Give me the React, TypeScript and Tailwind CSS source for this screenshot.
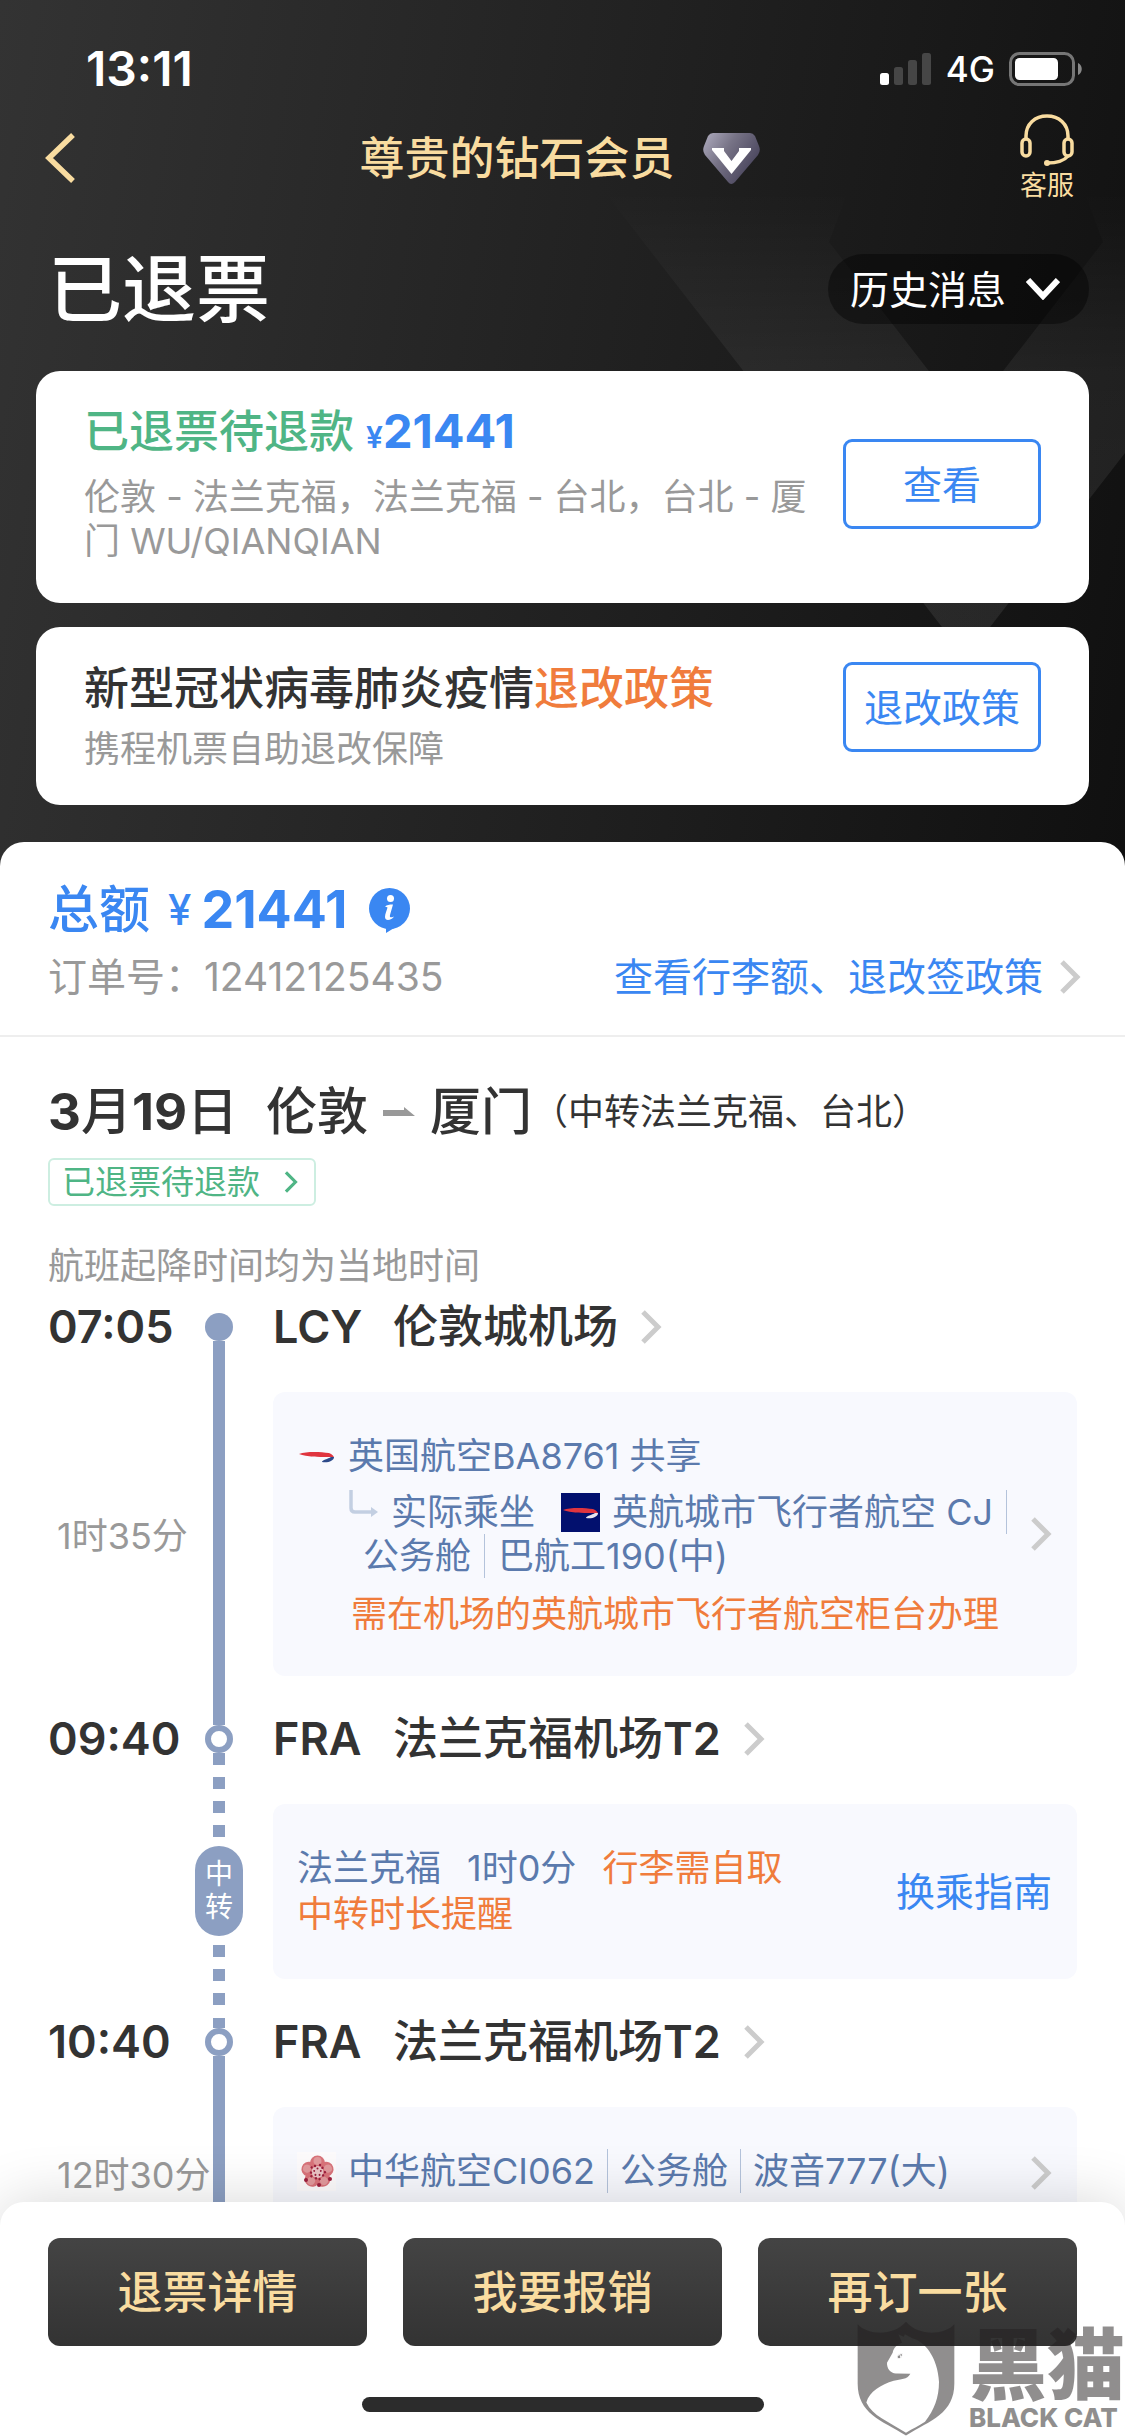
import React from "react";

const FONT =
  "font-['Inter','Noto_Sans_CJK_SC',sans-serif]";

function Chevron({ className }: { className: string }) {
  return (
    <svg viewBox="0 0 22 34" fill="none" stroke="currentColor" strokeWidth="5" className={className} aria-hidden="true">
      <path d="M3 2 L18 17 L3 32" />
    </svg>
  );
}

function Divider() {
  return <span className="h-11 w-px shrink-0 bg-[#b4c3db]" />;
}

function Facets() {
  return (
    <svg
      viewBox="600 186 525 480"
      className="pointer-events-none absolute right-0 top-[186px] h-[480px] w-[525px]"
      aria-hidden="true"
    >
      <defs>
        <linearGradient id="facet" x1="0" y1="190" x2="0" y2="600" gradientUnits="userSpaceOnUse">
          <stop offset="0" stopColor="#fff" stopOpacity="0" />
          <stop offset="0.45" stopColor="#fff" stopOpacity="0.06" />
          <stop offset="1" stopColor="#fff" stopOpacity="0.08" />
        </linearGradient>
      </defs>
      <path
        fill="url(#facet)"
        fillRule="evenodd"
        d="M600 186 H1332 L966 658 Z M850 186 L829 242 L966 419 L1103 242 L1082 186 Z"
      />
    </svg>
  );
}

function StatusBar() {
  return (
    <div className="flex h-[90px] items-center justify-between pl-[86px] pr-[43px] pt-12 text-white">
      <span className="text-5xl font-semibold leading-none">13:11</span>
      <div className="flex items-center gap-[14px]">
        <svg viewBox="0 0 52 32" className="h-8 w-[52px]" aria-hidden="true">
          <rect x="0" y="20" width="9" height="12" rx="2.5" fill="#fff" />
          <rect x="14" y="14" width="9" height="18" rx="2.5" fill="#464646" />
          <rect x="28" y="7" width="9" height="25" rx="2.5" fill="#464646" />
          <rect x="42" y="0" width="9" height="32" rx="2.5" fill="#464646" />
        </svg>
        <span className="text-[35px] font-medium leading-none">4G</span>
        <svg viewBox="0 0 73 34" className="h-[34px] w-[73px]" aria-hidden="true">
          <rect x="1.5" y="1.5" width="63" height="31" rx="9" fill="none" stroke="#767676" strokeWidth="3" />
          <rect x="6" y="6" width="43" height="22" rx="4.500" fill="#fff" />
          <path d="M69 11 C74 13 74 21 69 23 Z" fill="#888" />
        </svg>
      </div>
    </div>
  );
}

function NavBar() {
  return (
    <nav className="grid h-[136px] grid-cols-[1fr_auto_1fr] items-center pl-[45px] pr-[51px] text-[#f9dca0]">
      <button type="button" aria-label="返回" className="justify-self-start">
        <svg viewBox="0 0 30 50" fill="none" stroke="currentColor" strokeWidth="5.500" className="h-[50px] w-[30px]">
          <path d="M28 2 L4 25 L28 48" />
        </svg>
      </button>
      <div className="flex items-center gap-7">
        <h2 className="text-[45px] font-medium leading-none">尊贵的钻石会员</h2>
        <svg viewBox="0 0 57 51" className="h-[51px] w-[57px]" aria-hidden="true">
          <defs>
            <linearGradient id="gem" x1="0" y1="0.1" x2="1" y2="0.7">
              <stop offset="0" stopColor="#aaa7ba" />
              <stop offset="0.4" stopColor="#777386" />
              <stop offset="1" stopColor="#423e56" />
            </linearGradient>
          </defs>
          <path
            d="M10 0 H47 Q50 0 52 3 L56 13 Q58 18 55 22 L32 49 Q28 53 25 49 L2 22 Q-1 18 1 13 L5 3 Q7 0 10 0 Z"
            fill="url(#gem)"
          />
          <path d="M9 15 H21 V18 L28.500 28 L36 18 V15 H48 V17 L28.500 41 L9 17 Z" fill="#fff" />
        </svg>
      </div>
      <button type="button" className="flex flex-col items-center gap-1 justify-self-end">
        <svg viewBox="0 0 54 52" fill="none" stroke="currentColor" strokeWidth="3.500" className="h-[52px] w-[54px]" aria-hidden="true">
          <path d="M6 25 V22 C6 10 15 2 27 2 S48 10 48 22 V25" />
          <rect x="2" y="25" width="8" height="17" rx="4" />
          <rect x="44" y="25" width="8" height="17" rx="4" />
          <path d="M48 42 C44 47 38 49 27 49" />
          <circle cx="27" cy="49" r="3" fill="currentColor" stroke="none" />
        </svg>
        <span className="text-[27px] leading-[32px]">客服</span>
      </button>
    </nav>
  );
}

const outlineButton =
  "h-[90px] w-[198px] shrink-0 rounded-[9px] border-[3px] border-[#3a87f2] text-[39px] leading-none text-[#3a87f2]";

function NoticeCards() {
  return (
    <div className="mt-[19px] flex flex-col gap-6 px-9">
      <section className="flex items-center justify-between rounded-3xl bg-white pb-10 pl-12 pr-12 pt-[34px]">
        <div className="w-[732px]">
          <h3 className="text-[45px] font-medium leading-[54px] text-[#4fb585]">
            已退票待退款
            <span className="ml-3 text-[#3a87f2]">
              <span className="text-3xl font-semibold">¥</span>
              <span className="text-[47px] font-bold leading-[50px]">21441</span>
            </span>
          </h3>
          <p className="mt-4 text-4xl leading-[44px] text-[#999]">
            伦敦 - 法兰克福，法兰克福 - 台北，台北 - 厦门 WU/QIANQIAN
          </p>
        </div>
        <button type="button" className={outlineButton}>查看</button>
      </section>
      <section className="flex items-start justify-between rounded-3xl bg-white pb-[34px] pl-12 pr-12 pt-[35px]">
        <div>
          <h3 className="text-[45px] font-medium leading-[54px] text-[#333]">
            新型冠状病毒肺炎疫情<span className="text-[#f07c3c]">退改政策</span>
          </h3>
          <p className="mt-[11px] text-4xl leading-[44px] text-[#999]">携程机票自助退改保障</p>
        </div>
        <button type="button" className={outlineButton}>退改政策</button>
      </section>
    </div>
  );
}

function OrderSummary() {
  return (
    <section className="border-b-2 border-[#eee] px-12 pb-[31px] pt-[34px]">
      <div className="flex items-center text-[51px] font-medium leading-[68px] text-[#3a87f2]">
        <span>总额</span>
        <span className="ml-[18px] text-[42px]">¥</span>
        <span className="ml-[10px] text-[52px] font-bold">21441</span>
        <button type="button" aria-label="费用说明" className="ml-[22px]">
          <svg viewBox="0 0 41 45" className="h-[45px] w-[41px]">
            <circle cx="20.500" cy="20.500" r="20.500" fill="#3a87f2" />
            <path d="M17 38 V45 L30 37 Z" fill="#3a87f2" />
            <circle cx="21.500" cy="10.500" r="3.500" fill="#fff" />
            <path
              d="M16 18.500 C18 17 20 16.500 24 16.500 L21 27 C20.500 29.500 21.500 30 25 28.500 C23 32 16 34 16 29 C16 26 18 22 18.500 19.500 C18 19 17 19 16 18.500 Z"
              fill="#fff"
            />
          </svg>
        </button>
      </div>
      <div className="mt-[6px] flex items-center justify-between text-[39px] leading-[54px]">
        <span className="text-[#999]">订单号：12412125435</span>
        <a href="#policy" className="-mr-1 flex items-center gap-4 text-[#3a87f2]">
          查看行李额、退改签政策
          <Chevron className="h-[34px] w-[22px] text-[#ccc]" />
        </a>
      </div>
    </section>
  );
}

function TripHeading() {
  return (
    <div className="px-12 pt-[41px]">
      <h3 className="flex items-center text-[51px] font-medium leading-[68px] text-[#333]">
        <span className="font-bold">3</span>月<span className="font-bold">19</span>日
        <span className="ml-7">伦敦</span>
        <svg viewBox="0 0 32 10" className="mx-[15px] h-[10px] w-8" aria-hidden="true">
          <path d="M0 3 H21 V0 L32 9 H0 Z" fill="#999" />
        </svg>
        <span>厦门</span>
        <span className="text-4xl font-normal">（中转法兰克福、台北）</span>
      </h3>
      <button
        type="button"
        className="mt-3 flex h-12 items-center gap-6 rounded-md border-2 border-[#cdeee1] pl-3 pr-4 text-[33px] leading-none text-[#4fb585]"
      >
        已退票待退款
        <Chevron className="h-[22px] w-[14px]" />
      </button>
      <p className="mt-[38px] text-4xl leading-[44px] text-[#999]">航班起降时间均为当地时间</p>
    </div>
  );
}

function Stop({
  time,
  code,
  airport,
  terminal,
  duration,
  rail,
  children,
}: {
  time: string;
  code: string;
  airport: string;
  terminal?: string;
  duration?: string;
  rail: React.ReactNode;
  children: React.ReactNode;
}) {
  return (
    <li className="grid grid-cols-[147px_48px_1fr] grid-rows-[48px_auto]">
      <time className="text-[45px] font-semibold leading-[48px] text-[#333]">{time}</time>
      <div className="row-span-2 flex flex-col items-center">{rail}</div>
      <a href={"#" + code} className="ml-[30px] flex items-center text-[45px] font-medium leading-[48px] text-[#333]">
        <span className="w-[120px] font-semibold">{code}</span>
        <span>{airport}</span>
        <span className="font-semibold">{terminal}</span>
        <Chevron className="ml-[22px] h-[34px] w-[22px] text-[#ccc]" />
      </a>
      <div className="mb-[39px] mt-[41px] flex items-center pl-[9px] pt-1 text-4xl text-[#999]">
        <span className="whitespace-nowrap">{duration}</span>
      </div>
      <div className="mb-[39px] ml-[30px] mt-[41px] flex items-center rounded-xl bg-[#f8f9fe] pl-6 pr-[25px] text-4xl leading-[44px] text-[#5b7aad]">
        {children}
      </div>
    </li>
  );
}

function SolidRail({ first }: { first?: boolean }) {
  return (
    <>
      <span className={first ? "h-[10px]" : "h-[10px] w-3 bg-[#8c9fc2]"} />
      <span
        className={
          first ? "size-7 rounded-full bg-[#8c9fc2]" : "size-7 rounded-full border-[6px] border-[#8c9fc2] bg-white"
        }
      />
      <span className="w-3 flex-1 bg-[#8c9fc2]" />
    </>
  );
}

function Dashes({ count }: { count: number }) {
  return (
    <span className="flex flex-col gap-3">
      {Array.from({ length: count }, (_, i) => (
        <span key={i} className="size-3 bg-[#8c9fc2]" />
      ))}
    </span>
  );
}

function TransferRail() {
  return (
    <>
      <span className="h-[10px] w-3 bg-[#8c9fc2]" />
      <span className="size-7 rounded-full border-[6px] border-[#8c9fc2] bg-white" />
      <Dashes count={4} />
      <span className="my-[9px] flex h-[90px] w-12 flex-col items-center justify-center rounded-full bg-[#8c9fc2] text-[28px] leading-[33px] text-white">
        <span>中</span>
        <span>转</span>
      </span>
      <Dashes count={3} />
    </>
  );
}

function Ribbon({ tail }: { tail: string }) {
  return (
    <>
      <path d="M2 17 C10 14 24 15 32 16 C35 17 37 19 37 21 C36 20 33 20 30 20 C22 20 10 20 2 17 Z" fill="#e0353f" />
      <path d="M37 20 C37 24 31 26 25 25 C25 23 31 22 34 20 Z" fill={tail} />
    </>
  );
}

function Plum() {
  const angles = [0, 72, 144, 216, 288];
  return (
    <svg viewBox="0 0 39 39" className="size-[39px] bg-[#fdfbfc]" aria-hidden="true">
      {angles.map((a) => (
        <g key={a} transform={`rotate(${a} 20.5 20)`}>
          <circle cx="20.500" cy="11" r="7.500" fill="#d9737a" />
          <circle cx="20.500" cy="9" r="4" fill="#e29a9d" />
        </g>
      ))}
      <circle cx="20.500" cy="20" r="6" fill="#eac3c5" />
      {angles.map((a) => (
        <g key={a} transform={`rotate(${a} 20.5 20)`} fill="#9c1f3d">
          <circle cx="18" cy="14" r="1.200" />
          <circle cx="23" cy="13" r="1.200" />
          <circle cx="20.500" cy="16.500" r="1" />
        </g>
      ))}
      <circle cx="9" cy="28" r="2" fill="#9c1f3d" />
      <circle cx="22" cy="33" r="2" fill="#9c1f3d" />
      <circle cx="33" cy="27" r="2" fill="#9c1f3d" />
    </svg>
  );
}

function Timeline() {
  return (
    <ol className="mt-[15px] px-12">
      <Stop time="07:05" code="LCY" airport="伦敦城机场" duration="1时35分" rail={<SolidRail first />}>
        <div className="flex-1 pb-10 pt-[42px]">
          <div className="flex items-center gap-3">
            <svg viewBox="0 0 39 39" className="size-[39px]" aria-hidden="true">
              <Ribbon tail="#2d4a8a" />
            </svg>
            <span>英国航空BA8761 共享</span>
          </div>
          <div className="mt-3 pl-[52px]">
            <div className="flex items-center">
              <svg viewBox="0 0 30 28" className="mb-4 h-7 w-[30px]" aria-hidden="true">
                <path d="M2 0 V18 Q2 22 6 22 H24" fill="none" stroke="#c3cfe2" strokeWidth="3.500" />
                <path d="M22 17 L29 22 L22 27 Z" fill="#c3cfe2" />
              </svg>
              <span className="ml-3">实际乘坐</span>
              <svg viewBox="0 0 39 39" className="ml-[26px] size-[39px] bg-[#02106e]" aria-hidden="true">
                <Ribbon tail="#e6e6ee" />
              </svg>
              <span className="ml-3 mr-[13px] whitespace-nowrap">英航城市飞行者航空 CJ</span>
              <Divider />
            </div>
            <div className="flex items-center gap-[13px] pl-[14px]">
              <span>公务舱</span>
              <Divider />
              <span>巴航工190(中)</span>
            </div>
          </div>
          <p className="mt-[14px] whitespace-nowrap pl-[54px] text-[#f07c3c]">需在机场的英航城市飞行者航空柜台办理</p>
        </div>
        <Chevron className="h-[34px] w-[22px] text-[#ccc]" />
      </Stop>
      <Stop time="09:40" code="FRA" airport="法兰克福机场" terminal="T2" rail={<TransferRail />}>
        <div className="flex-1 pb-[43px] pt-[42px]">
          <div className="flex gap-[26px]">
            <span>法兰克福</span>
            <span>1时0分</span>
            <span className="text-[#f07c3c]">行李需自取</span>
          </div>
          <p className="pt-[2px] text-[#f07c3c]">中转时长提醒</p>
        </div>
        <a href="#transfer" className="text-[39px] text-[#3a87f2]">
          换乘指南
        </a>
      </Stop>
      <Stop time="10:40" code="FRA" airport="法兰克福机场" terminal="T2" duration="12时30分" rail={<SolidRail />}>
        <div className="flex flex-1 items-center gap-3 pb-[46px] pt-[42px]">
          <Plum />
          <span>中华航空CI062</span>
          <Divider />
          <span>公务舱</span>
          <Divider />
          <span>波音777(大)</span>
        </div>
        <Chevron className="h-[34px] w-[22px] text-[#ccc]" />
      </Stop>
    </ol>
  );
}

function ActionBar() {
  return (
    <footer className="relative z-10 -mt-6 rounded-t-3xl bg-white px-12 pb-6 pt-9 shadow-[0_0_60px_rgba(0,0,0,0.16)]">
      <div className="grid grid-cols-3 gap-9">
        {["退票详情", "我要报销", "再订一张"].map((label) => (
          <button
            key={label}
            type="button"
            className="h-[108px] rounded-xl bg-linear-to-b from-[#444] to-[#333] text-[45px] font-medium leading-none text-[#f9dca0]"
          >
            {label}
          </button>
        ))}
      </div>
      <div className="mx-auto mt-[51px] h-[15px] w-[402px] rounded-full bg-[#2c2c2c]" />
    </footer>
  );
}

function Watermark() {
  return (
    <div className="pointer-events-none absolute bottom-0 right-0 z-20 flex items-start gap-[14px] text-[#231f20] opacity-50">
      <svg viewBox="48 33 294 344" className="h-[115px] w-[98px]" aria-hidden="true">
        <path
          fill="currentColor"
          fillRule="evenodd"
          d="M50 42 C80 76 160 78 195 35 C230 78 310 76 340 42 V220 C340 310 270 330 195 376 C120 330 50 310 50 220 Z
             M172 72 L183 98 C168 104 158 112 155 128 L138 158 C137 176 150 192 168 190 L208 191 C198 210 180 206 158 212 C120 223 85 245 76 277 C95 318 140 332 195 368 C215 356 235 346 252 335 C280 300 294 262 294 215 C290 140 250 92 214 84 L192 72 L188 80 Z"
        />
        <path d="M168 140 Q174 128 185 130 Q183 146 170 146 Z M176 132 L180 142" fill="currentColor" stroke="#fff" strokeWidth="3" />
      </svg>
      <div className="flex flex-col items-start">
        <span className="font-['Noto_Sans_CJK_SC',sans-serif] text-[78px] font-black leading-[78px]">黑猫</span>
        <span className="text-[26px] font-extrabold leading-[37px]">BLACK CAT</span>
      </div>
    </div>
  );
}

export default function App() {
  return (
    <div lang="zh-CN" className={"relative flex h-screen flex-col overflow-hidden bg-white " + FONT}>
      <header className="relative shrink-0 bg-[linear-gradient(100deg,#333_0%,#202020_55%,#101010_100%)] pb-[61px]">
        <Facets />
        <div className="relative">
          <StatusBar />
          <NavBar />
          <div className="flex h-[126px] items-center justify-between pl-12 pr-9">
            <h1 className="text-[74px] font-medium leading-none text-white">已退票</h1>
            <button
              type="button"
              className="flex h-[70px] items-center gap-5 rounded-full bg-black/40 pl-[22px] pr-[29px] text-[39px] leading-none text-white"
            >
              历史消息
              <svg viewBox="0 0 34 22" fill="none" stroke="currentColor" strokeWidth="6" className="h-[22px] w-[34px]" aria-hidden="true">
                <path d="M2 2 L17 18 L32 2" />
              </svg>
            </button>
          </div>
          <NoticeCards />
        </div>
      </header>
      <main className="relative -mt-6 min-h-0 flex-1 overflow-hidden rounded-t-3xl bg-white">
        <OrderSummary />
        <TripHeading />
        <Timeline />
      </main>
      <ActionBar />
      <Watermark />
    </div>
  );
}
